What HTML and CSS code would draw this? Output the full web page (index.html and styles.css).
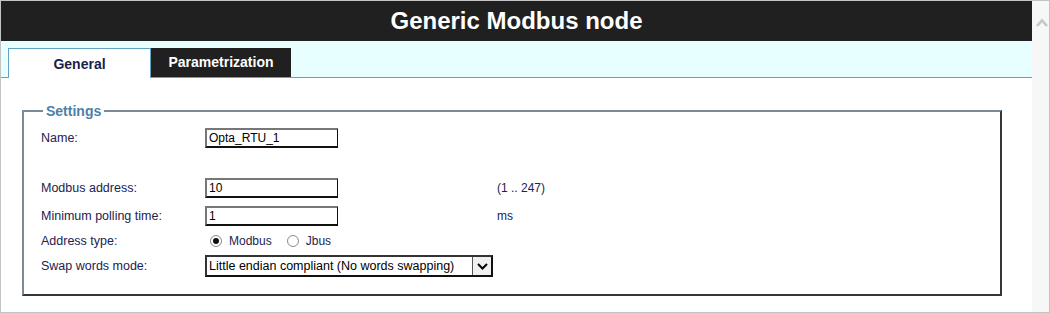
FILE: index.html
```html
<!DOCTYPE html>
<html>
<head>
<meta charset="utf-8">
<link rel="stylesheet" href="styles.css">
</head>
<body>
<div class="frame">
  <div class="main">
    <div class="header">Generic Modbus node</div>
    <div class="tabbar">
      <div class="tab tab-active">General</div>
      <div class="tab tab-dark">Parametrization</div>
    </div>
    <div class="content">
      <fieldset class="settings">
        <legend>Settings</legend>
        <div class="row row-name">
          <span class="label">Name:</span>
          <span class="field"><span class="input">Opta_RTU_1</span></span>
          <span class="hint"></span>
        </div>
        <div class="row row-addr">
          <span class="label">Modbus address:</span>
          <span class="field"><span class="input">10</span></span>
          <span class="hint">(1 .. 247)</span>
        </div>
        <div class="row row-poll">
          <span class="label">Minimum polling time:</span>
          <span class="field"><span class="input">1</span></span>
          <span class="hint">ms</span>
        </div>
        <div class="row row-type">
          <span class="label">Address type:</span>
          <span class="field radios">
            <span class="radio checked"></span><span class="rlabel">Modbus</span>
            <span class="radio"></span><span class="rlabel">Jbus</span>
          </span>
          <span class="hint"></span>
        </div>
        <div class="row row-swap">
          <span class="label">Swap words mode:</span>
          <span class="field">
            <span class="select">
              <span class="select-value">Little endian compliant (No words swapping)</span>
              <span class="select-btn"><svg width="11" height="7" viewBox="0 0 11 7"><polyline points="1,1 5.5,5.5 10,1" fill="none" stroke="#000" stroke-width="2"/></svg></span>
            </span>
          </span>
          <span class="hint"></span>
        </div>
      </fieldset>
    </div>
  </div>
  <div class="scroll">
    <svg class="scroll-up" width="12" height="9" viewBox="0 0 12 9"><polyline points="1,8 6,2.5 11,8" fill="none" stroke="#c6c6c6" stroke-width="2.6"/></svg>
  </div>
</div>
</body>
</html>
```

FILE: styles.css
```css
html, body {
  margin: 0;
  padding: 0;
  background: #ffffff;
}

body {
  font-family: "Liberation Sans", Arial, sans-serif;
  font-size: 12px;
  color: #222250;
}

.frame {
  width: 1048px;
  height: 311px;
  border: 1px solid #c4c4c4;
  display: flex;
  overflow: hidden;
}

.main {
  width: 1031px;
  display: flex;
  flex-direction: column;
}

.scroll {
  width: 17px;
  background: #f7f7f7;
  display: flex;
  justify-content: center;
  padding-top: 17px;
  box-sizing: border-box;
}

.scroll-up {
  display: block;
  margin-left: 3px;
}

.header {
  height: 40px;
  background: #202020;
  color: #ffffff;
  font-size: 24px;
  font-weight: bold;
  display: flex;
  align-items: center;
  justify-content: center;
}

.tabbar {
  height: 29px;
  padding: 7px 0 0 7px;
  background: #e8ffff;
  border-bottom: 1px solid #65a2c2;
  display: flex;
  align-items: flex-start;
}

.tab {
  box-sizing: border-box;
  display: flex;
  align-items: center;
  justify-content: center;
  font-size: 14px;
  font-weight: bold;
}

.tab-active {
  width: 143px;
  height: 30px;
  background: #ffffff;
  color: #1c1c4c;
  border: 1px solid #65a2c2;
  border-bottom: none;
  position: relative;
  z-index: 1;
}

.tab-dark {
  width: 140px;
  height: 29px;
  background: #202020;
  color: #ffffff;
  padding-bottom: 2px;
}

.content {
  flex: 1;
  background: #ffffff;
  padding: 25px 0 0 21px;
}

.settings {
  width: 980px;
  box-sizing: border-box;
  margin: 0;
  padding: 9px 0 17px 17px;
  border: 2px solid;
  border-color: #7c8a96 #30363c #30363c #7c8a96;
  min-width: 0;
}

.settings legend {
  margin-left: 2px;
  padding: 0 3px 0 3px;
  font-size: 14px;
  font-weight: bold;
  color: #4c80a8;
}

.row {
  display: grid;
  grid-template-columns: 164px 292px auto;
  align-items: center;
}

.row-name { height: 20px; margin-bottom: 30px; }
.row-addr { height: 20px; margin-bottom: 8px; }
.row-poll { height: 20px; margin-bottom: 4px; }
.row-type { height: 22px; margin-bottom: 3px; }
.row-swap { height: 22px; }

.label {
  color: #222250;
  font-size: 12.5px;
}

.hint {
  color: #222250;
}

.input {
  box-sizing: border-box;
  display: flex;
  align-items: center;
  width: 133px;
  height: 20px;
  padding-left: 2px;
  border-style: solid;
  border-width: 2px 1px 2px 2px;
  border-color: #777777 #111111 #111111 #777777;
  color: #000000;
  background: #ffffff;
}

.radios {
  display: flex;
  align-items: center;
  padding-left: 5px;
}

.radio {
  box-sizing: border-box;
  width: 12px;
  height: 12px;
  border: 1px solid #8a8a8a;
  border-radius: 50%;
  background: #ffffff;
  display: flex;
  align-items: center;
  justify-content: center;
}

.radio.checked::after {
  content: "";
  width: 6px;
  height: 6px;
  border-radius: 50%;
  background: #111111;
}

.rlabel {
  margin-left: 7px;
  margin-right: 15px;
  color: #222250;
}

.select {
  box-sizing: border-box;
  display: flex;
  align-items: stretch;
  width: 288px;
  height: 22px;
  border-style: solid;
  border-width: 2px;
  border-color: #333333 #111111 #111111 #333333;
  background: #ffffff;
}

.select-value {
  flex: 1;
  display: flex;
  align-items: center;
  padding-left: 2px;
  color: #000000;
  font-size: 12.5px;
}

.select-btn {
  width: 18px;
  border-left: 1px solid #555555;
  background: #f0f0f0;
  display: flex;
  align-items: center;
  justify-content: center;
}
```
